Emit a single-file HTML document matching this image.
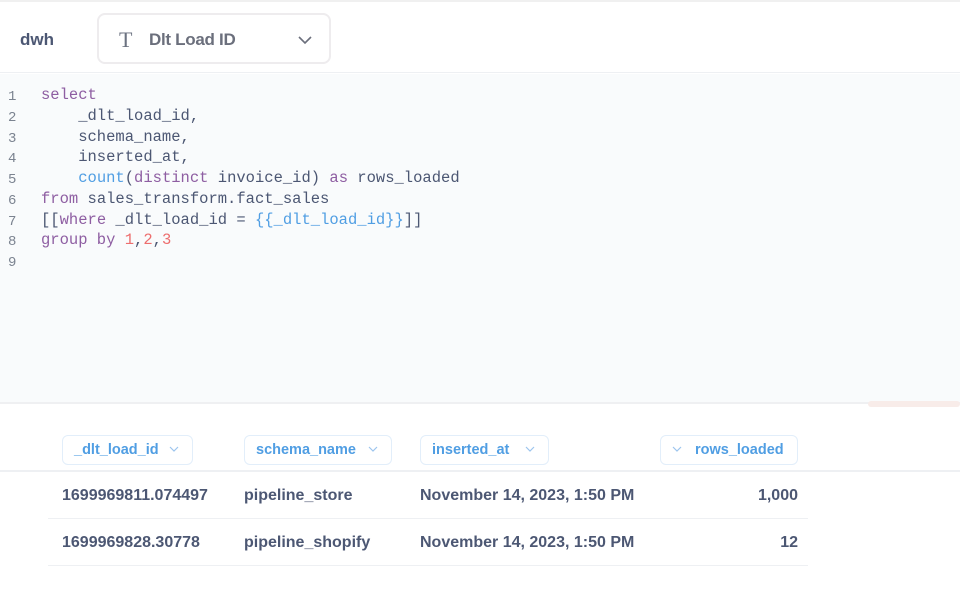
<!DOCTYPE html>
<html><head><meta charset="utf-8"><style>
*{margin:0;padding:0;box-sizing:border-box}
body{width:960px;height:615px;background:#fff;font-family:"Liberation Sans",sans-serif;position:relative;overflow:hidden;color:#4c5773}
.hdr{position:absolute;left:0;top:0;width:960px;height:73px;background:#fff;border-top:2px solid #f0f0f0;border-bottom:1px solid #eef0f3}
.dwh{position:absolute;left:20px;top:28px;font-weight:bold;font-size:17px;color:#4c5773}
.dd{position:absolute;left:97px;top:11px;width:234px;height:51px;border:2px solid #eeecee;border-radius:8px;background:#fff}
.dd .t{position:absolute;left:20px;top:12px;font-family:"Liberation Serif",serif;font-size:22px;color:#6b7280}
.dd .l{position:absolute;left:50px;top:15px;font-weight:bold;font-size:17px;color:#6b6f7c;letter-spacing:-0.3px}
.code{position:absolute;left:0;top:74px;width:960px;height:330px;background:#f9fbfc;border-bottom:2px solid #eff0f2;font-family:"Liberation Mono",monospace;font-size:15.5px}
.ln{position:absolute;left:0;width:30px;text-align:left;padding-left:8px;color:#7b8390;font-size:14px;margin-top:3px}
.cl{position:absolute;left:41px;white-space:pre;color:#4c5773}
.k{color:#8e5ea2}.b{color:#509ee3}.r{color:#ed6e6e}
.bar{position:absolute;left:868px;top:401px;width:92px;height:6px;background:#f8ece9;border-radius:3px}
.pill{position:absolute;top:435px;height:30px;border:1.5px solid #e2eefa;border-radius:6px;font-weight:bold;font-size:14.5px;color:#509ee3;line-height:28px;padding-left:11px}
.pill svg{position:absolute;top:10px}
.hl{position:absolute;left:0;width:960px;height:2px;background:#eef0f3}
.rl{position:absolute;left:48px;width:760px;height:1px;background:#eef0f3}
.c{position:absolute;font-weight:bold;font-size:16px;color:#4c5773}
</style></head><body>
<div class="hdr">
<div class="dwh">dwh</div>
<div class="dd"><span class="t">T</span><span class="l">Dlt Load ID</span>
<svg style="position:absolute;left:199px;top:21px" width="14" height="9" viewBox="0 0 14 9"><path d="M1 1l6 6 6-6" fill="none" stroke="#6b6f7c" stroke-width="1.6"/></svg></div>
</div>
<div class="code">
<div class="ln" style="top:12px">1</div><div class="cl" style="top:12px"><span class="k">select</span></div>
<div class="ln" style="top:33px">2</div><div class="cl" style="top:33px">    _dlt_load_id,</div>
<div class="ln" style="top:54px">3</div><div class="cl" style="top:54px">    schema_name,</div>
<div class="ln" style="top:74px">4</div><div class="cl" style="top:74px">    inserted_at,</div>
<div class="ln" style="top:95px">5</div><div class="cl" style="top:95px">    <span class="b">count</span>(<span class="k">distinct</span> invoice_id) <span class="k">as</span> rows_loaded</div>
<div class="ln" style="top:116px">6</div><div class="cl" style="top:116px"><span class="k">from</span> sales_transform.fact_sales</div>
<div class="ln" style="top:137px">7</div><div class="cl" style="top:137px">[[<span class="k">where</span> _dlt_load_id = <span class="b">{{_dlt_load_id}}</span>]]</div>
<div class="ln" style="top:157px">8</div><div class="cl" style="top:157px"><span class="k">group by</span> <span class="r">1</span>,<span class="r">2</span>,<span class="r">3</span></div>
<div class="ln" style="top:178px">9</div>
</div>
<div class="bar"></div>
<div class="pill" style="left:62px;width:131px">_dlt_load_id<svg style="left:106px" width="10" height="7" viewBox="0 0 10 7"><path d="M1 1l4 4 4-4" fill="none" stroke="#9cc5ee" stroke-width="1.2"/></svg></div>
<div class="pill" style="left:244px;width:148px">schema_name<svg style="left:123px" width="10" height="7" viewBox="0 0 10 7"><path d="M1 1l4 4 4-4" fill="none" stroke="#9cc5ee" stroke-width="1.2"/></svg></div>
<div class="pill" style="left:420px;width:129px">inserted_at<svg style="left:104px" width="10" height="7" viewBox="0 0 10 7"><path d="M1 1l4 4 4-4" fill="none" stroke="#9cc5ee" stroke-width="1.2"/></svg></div>
<div class="pill" style="left:660px;width:138px;padding-left:34px">rows_loaded<svg style="left:11px" width="10" height="7" viewBox="0 0 10 7"><path d="M1 1l4 4 4-4" fill="none" stroke="#9cc5ee" stroke-width="1.2"/></svg></div>
<div class="hl" style="top:470px"></div>
<div class="c" style="left:62px;top:487px">1699969811.074497</div>
<div class="c" style="left:244px;top:487px">pipeline_store</div>
<div class="c" style="left:420px;top:487px">November 14, 2023, 1:50 PM</div>
<div class="c" style="left:698px;width:100px;text-align:right;top:487px">1,000</div>
<div class="rl" style="top:518px"></div>
<div class="c" style="left:62px;top:534px">1699969828.30778</div>
<div class="c" style="left:244px;top:534px">pipeline_shopify</div>
<div class="c" style="left:420px;top:534px">November 14, 2023, 1:50 PM</div>
<div class="c" style="left:698px;width:100px;text-align:right;top:534px">12</div>
<div class="rl" style="top:565px"></div>
</body></html>
